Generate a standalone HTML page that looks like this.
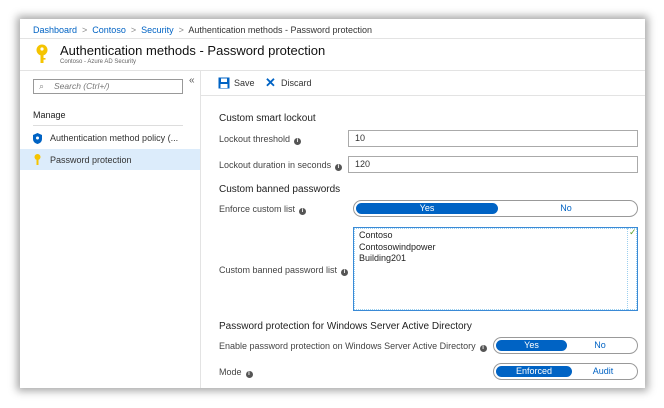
<!DOCTYPE html><html><head><style>
body{margin:0;width:664px;height:408px;background:#fff;font-family:"Liberation Sans",sans-serif;position:relative;overflow:hidden;color:#333}
.a{position:absolute;white-space:nowrap}
.win{position:absolute;left:20px;top:19px;width:625px;height:369px;background:#fff;box-shadow:0 0 8px 3px rgba(0,0,0,.35)}
.l{font-size:9px;color:#444}
.h{font-size:10px;color:#222}
.i{display:inline-block;width:7px;height:7px;border-radius:50%;background:#555;color:#fff;font-size:6px;text-align:center;line-height:7px;vertical-align:0px;margin-left:4px;font-weight:bold}
.in{position:absolute;border:1px solid #aaa;background:#fff;font-size:9px;padding-left:6px;box-sizing:border-box;line-height:15px}
.tg{position:absolute;border:1px solid #999;border-radius:9px;box-sizing:border-box;font-size:9px;color:#0063c4}
.tg .y{position:absolute;left:2px;top:2px;bottom:2px;background:#0063c4;color:#fff;border-radius:7px;text-align:center}
.tg .n{position:absolute;top:2px;bottom:2px;right:2px;text-align:center}
</style></head><body>
<div class="win"></div>
<div class="a" style="left:33px;top:25px;font-size:9px;color:#0063c4">Dashboard <span style="color:#888">&nbsp;&gt;&nbsp;</span> Contoso <span style="color:#888">&nbsp;&gt;&nbsp;</span> Security <span style="color:#888">&nbsp;&gt;&nbsp;</span> <span style="color:#333">Authentication methods - Password protection</span></div>
<div class="a" style="left:20px;top:38px;width:625px;height:1px;background:#e3e3e3"></div>
<svg class="a" style="left:35px;top:44px" width="14" height="20"><circle cx="7" cy="6" r="5.5" fill="#f5c400"/><circle cx="7" cy="5" r="1.6" fill="#fff"/><rect x="5.5" y="10" width="3" height="9" fill="#f5c400"/><rect x="8" y="14" width="2.5" height="1.6" fill="#f5c400"/></svg>
<div class="a" style="left:60px;top:43px;font-size:13px;color:#111">Authentication methods - Password protection</div>
<div class="a" style="left:60px;top:59px;font-size:6px;color:#666">Contoso - Azure AD Security</div>
<div class="a" style="left:20px;top:70px;width:625px;height:1px;background:#e3e3e3"></div>
<div class="a" style="left:200px;top:71px;width:1px;height:317px;background:#e3e3e3"></div>
<div class="a" style="left:33px;top:79px;width:150px;height:15px;border:1px solid #999;box-sizing:border-box;font-size:8.5px;color:#777;font-style:italic;line-height:13px;padding-left:20px">Search (Ctrl+/)</div>
<div class="a" style="left:39px;top:81px;font-size:9px;color:#888">⌕</div>
<div class="a" style="left:189px;top:75px;font-size:10px;color:#555">«</div>
<div class="a" style="left:33px;top:110px;font-size:9px;color:#222">Manage</div>
<div class="a" style="left:33px;top:125px;width:150px;height:1px;background:#ddd"></div>
<svg class="a" style="left:33px;top:133px" width="9" height="11"><path d="M4.5 0L9 2v4c0 3-2.5 4.5-4.5 5C2.5 10.5 0 9 0 6V2z" fill="#0063c4"/><circle cx="4.5" cy="5" r="1.5" fill="#fff"/></svg>
<div class="a" style="left:50px;top:133px;font-size:9px;color:#333">Authentication method policy (...</div>
<div class="a" style="left:20px;top:149px;width:180px;height:21px;background:#dcecfb"></div>
<svg class="a" style="left:34px;top:154px" width="7" height="11"><circle cx="3.5" cy="3" r="3" fill="#f5c400"/><rect x="2.5" y="5" width="2" height="6" fill="#f5c400"/></svg>
<div class="a" style="left:50px;top:155px;font-size:9px;color:#333">Password protection</div>
<svg class="a" style="left:218px;top:77px" width="12" height="12"><rect x="0.5" y="0.5" width="11" height="11" fill="#0063c4"/><rect x="3" y="1.5" width="6" height="3.5" fill="#fff"/><rect x="2.5" y="7" width="7" height="4" fill="#fff"/></svg>
<div class="a" style="left:234px;top:78px;font-size:9px">Save</div>
<div class="a" style="left:265px;top:75px;font-size:13px;color:#0063c4;font-weight:bold">✕</div>
<div class="a" style="left:281px;top:78px;font-size:9px">Discard</div>
<div class="a" style="left:201px;top:95px;width:444px;height:1px;background:#e3e3e3"></div>
<div class="a h" style="left:219px;top:113px">Custom smart lockout</div>
<div class="a l" style="left:219px;top:134px">Lockout threshold<span class="i">i</span></div>
<div class="in" style="left:348px;top:130px;width:290px;height:17px">10</div>
<div class="a l" style="left:219px;top:160px">Lockout duration in seconds<span class="i">i</span></div>
<div class="in" style="left:348px;top:156px;width:290px;height:17px">120</div>
<div class="a h" style="left:219px;top:184px">Custom banned passwords</div>
<div class="a l" style="left:219px;top:204px">Enforce custom list<span class="i">i</span></div>
<div class="tg" style="left:353px;top:200px;width:285px;height:17px"><div class="y" style="width:142px;line-height:11px">Yes</div><div class="n" style="width:138px;line-height:11px">No</div></div>
<div class="a" style="left:353px;top:227px;width:285px;height:84px;border:1px solid #3a8ad6;box-sizing:border-box;outline:1px dotted #9cd0f0;outline-offset:-2px"></div>
<div class="a" style="left:627px;top:228px;width:1px;height:82px;border-left:1px dotted #9cd0f0"></div>
<div class="a" style="left:629px;top:227px;font-size:9px;color:#5a9e2a">✓</div>
<div class="a" style="left:359px;top:230px;font-size:9px;line-height:11.5px;color:#222">Contoso<br>Contosowindpower<br>Building201</div>
<div class="a l" style="left:219px;top:265px">Custom banned password list<span class="i">i</span></div>
<div class="a h" style="left:219px;top:321px">Password protection for Windows Server Active Directory</div>
<div class="a l" style="left:219px;top:341px">Enable password protection on Windows Server Active Directory<span class="i">i</span></div>
<div class="tg" style="left:493px;top:337px;width:145px;height:17px"><div class="y" style="width:71px;line-height:11px">Yes</div><div class="n" style="width:70px;line-height:11px">No</div></div>
<div class="a l" style="left:219px;top:367px">Mode<span class="i">i</span></div>
<div class="tg" style="left:493px;top:363px;width:145px;height:17px"><div class="y" style="width:76px;line-height:11px">Enforced</div><div class="n" style="width:64px;line-height:11px">Audit</div></div>
</body></html>
